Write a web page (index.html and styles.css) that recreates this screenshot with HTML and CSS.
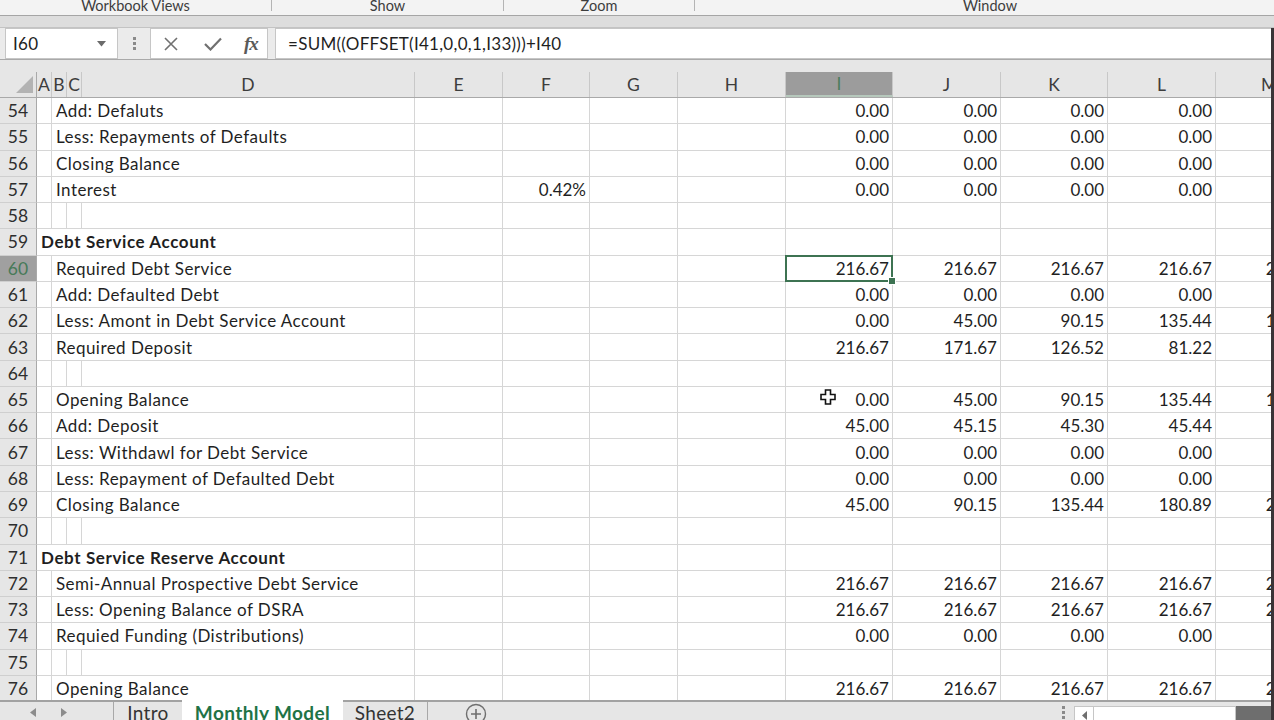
FILE: index.html
```html
<!DOCTYPE html>
<html lang="en">
<head>
<meta charset="utf-8">
<title>Monthly Model</title>
<link rel="stylesheet" href="styles.css">
</head>
<body>
<div class="ribbon">
  <div class="grp g1"><span>Workbook Views</span></div>
  <div class="grp g2"><span>Show</span></div>
  <div class="grp g3"><span>Zoom</span></div>
  <div class="grp g4"><span>Window</span></div>
</div>
<div class="band"></div>
<div class="fbar">
  <div class="namebox"><span>I60</span>
    <svg class="caret" width="9" height="6" viewBox="0 0 9 6"><polygon points="0,0 9,0 4.5,5.5" fill="#6b6b6b"/></svg>
  </div>
  <div class="fdots"><i></i><i></i><i></i></div>
  <div class="fbtns">
    <svg class="ic-x" width="14" height="14" viewBox="0 0 14 14"><path d="M1 1 L13 13 M13 1 L1 13" stroke="#707070" stroke-width="1.6" fill="none"/></svg>
    <svg class="ic-ok" width="18" height="14" viewBox="0 0 18 14"><path d="M1 7 L6.5 12.5 L17 1.5" stroke="#707070" stroke-width="2.2" fill="none"/></svg>
    <span class="fx">fx</span>
  </div>
  <div class="finput">=SUM((OFFSET(I41,0,0,1,I33)))+I40</div>
</div>
<div class="gap"></div>
<div class="sheet">
  <div class="row hdr">
    <div class="corner"><svg width="17" height="17" viewBox="0 0 17 17"><polygon points="17,0 17,17 0,17" fill="#b3b3b3"/></svg></div>
    <div class="hc">A</div><div class="hc">B</div><div class="hc">C</div><div class="hc">D</div>
    <div class="hc">E</div><div class="hc">F</div><div class="hc">G</div><div class="hc">H</div>
    <div class="hc hsel">I</div><div class="hc">J</div><div class="hc">K</div><div class="hc">L</div><div class="hc">M</div>
  </div>
  <div class="rows">
    <div class="row"><div class="rh">54</div><div class="c"></div><div class="c lab">Add: Defaluts</div><div class="c"></div><div class="c"></div><div class="c"></div><div class="c"></div><div class="c n">0.00</div><div class="c n">0.00</div><div class="c n">0.00</div><div class="c n">0.00</div><div class="c n">0.00</div></div>
    <div class="row"><div class="rh">55</div><div class="c"></div><div class="c lab">Less: Repayments of Defaults</div><div class="c"></div><div class="c"></div><div class="c"></div><div class="c"></div><div class="c n">0.00</div><div class="c n">0.00</div><div class="c n">0.00</div><div class="c n">0.00</div><div class="c n">0.00</div></div>
    <div class="row"><div class="rh">56</div><div class="c"></div><div class="c lab">Closing Balance</div><div class="c"></div><div class="c"></div><div class="c"></div><div class="c"></div><div class="c n">0.00</div><div class="c n">0.00</div><div class="c n">0.00</div><div class="c n">0.00</div><div class="c n">0.00</div></div>
    <div class="row"><div class="rh">57</div><div class="c"></div><div class="c lab">Interest</div><div class="c"></div><div class="c n">0.42%</div><div class="c"></div><div class="c"></div><div class="c n">0.00</div><div class="c n">0.00</div><div class="c n">0.00</div><div class="c n">0.00</div><div class="c n">0.00</div></div>
    <div class="row"><div class="rh">58</div><div class="c"></div><div class="c"></div><div class="c"></div><div class="c"></div><div class="c"></div><div class="c"></div><div class="c"></div><div class="c"></div><div class="c"></div><div class="c"></div><div class="c"></div><div class="c"></div><div class="c"></div></div>
    <div class="row"><div class="rh">59</div><div class="c sec">Debt Service Account</div><div class="c"></div><div class="c"></div><div class="c"></div><div class="c"></div><div class="c"></div><div class="c"></div><div class="c"></div><div class="c"></div><div class="c"></div></div>
    <div class="row"><div class="rh rsel">60</div><div class="c"></div><div class="c lab">Required Debt Service</div><div class="c"></div><div class="c"></div><div class="c"></div><div class="c"></div><div class="c n sel">216.67</div><div class="c n">216.67</div><div class="c n">216.67</div><div class="c n">216.67</div><div class="c n">216.67</div></div>
    <div class="row"><div class="rh">61</div><div class="c"></div><div class="c lab">Add: Defaulted Debt</div><div class="c"></div><div class="c"></div><div class="c"></div><div class="c"></div><div class="c n">0.00</div><div class="c n">0.00</div><div class="c n">0.00</div><div class="c n">0.00</div><div class="c n">0.00</div></div>
    <div class="row"><div class="rh">62</div><div class="c"></div><div class="c lab">Less: Amont in Debt Service Account</div><div class="c"></div><div class="c"></div><div class="c"></div><div class="c"></div><div class="c n">0.00</div><div class="c n">45.00</div><div class="c n">90.15</div><div class="c n">135.44</div><div class="c n">180.89</div></div>
    <div class="row"><div class="rh">63</div><div class="c"></div><div class="c lab">Required Deposit</div><div class="c"></div><div class="c"></div><div class="c"></div><div class="c"></div><div class="c n">216.67</div><div class="c n">171.67</div><div class="c n">126.52</div><div class="c n">81.22</div><div class="c n">35.78</div></div>
    <div class="row"><div class="rh">64</div><div class="c"></div><div class="c"></div><div class="c"></div><div class="c"></div><div class="c"></div><div class="c"></div><div class="c"></div><div class="c"></div><div class="c"></div><div class="c"></div><div class="c"></div><div class="c"></div><div class="c"></div></div>
    <div class="row"><div class="rh">65</div><div class="c"></div><div class="c lab">Opening Balance</div><div class="c"></div><div class="c"></div><div class="c"></div><div class="c"></div><div class="c n">0.00</div><div class="c n">45.00</div><div class="c n">90.15</div><div class="c n">135.44</div><div class="c n">180.89</div></div>
    <div class="row"><div class="rh">66</div><div class="c"></div><div class="c lab">Add: Deposit</div><div class="c"></div><div class="c"></div><div class="c"></div><div class="c"></div><div class="c n">45.00</div><div class="c n">45.15</div><div class="c n">45.30</div><div class="c n">45.44</div><div class="c n">45.59</div></div>
    <div class="row"><div class="rh">67</div><div class="c"></div><div class="c lab">Less: Withdawl for Debt Service</div><div class="c"></div><div class="c"></div><div class="c"></div><div class="c"></div><div class="c n">0.00</div><div class="c n">0.00</div><div class="c n">0.00</div><div class="c n">0.00</div><div class="c n">0.00</div></div>
    <div class="row"><div class="rh">68</div><div class="c"></div><div class="c lab">Less: Repayment of Defaulted Debt</div><div class="c"></div><div class="c"></div><div class="c"></div><div class="c"></div><div class="c n">0.00</div><div class="c n">0.00</div><div class="c n">0.00</div><div class="c n">0.00</div><div class="c n">0.00</div></div>
    <div class="row"><div class="rh">69</div><div class="c"></div><div class="c lab">Closing Balance</div><div class="c"></div><div class="c"></div><div class="c"></div><div class="c"></div><div class="c n">45.00</div><div class="c n">90.15</div><div class="c n">135.44</div><div class="c n">180.89</div><div class="c n">226.48</div></div>
    <div class="row"><div class="rh">70</div><div class="c"></div><div class="c"></div><div class="c"></div><div class="c"></div><div class="c"></div><div class="c"></div><div class="c"></div><div class="c"></div><div class="c"></div><div class="c"></div><div class="c"></div><div class="c"></div><div class="c"></div></div>
    <div class="row"><div class="rh">71</div><div class="c sec">Debt Service Reserve Account</div><div class="c"></div><div class="c"></div><div class="c"></div><div class="c"></div><div class="c"></div><div class="c"></div><div class="c"></div><div class="c"></div><div class="c"></div></div>
    <div class="row"><div class="rh">72</div><div class="c"></div><div class="c lab">Semi-Annual Prospective Debt Service</div><div class="c"></div><div class="c"></div><div class="c"></div><div class="c"></div><div class="c n">216.67</div><div class="c n">216.67</div><div class="c n">216.67</div><div class="c n">216.67</div><div class="c n">216.67</div></div>
    <div class="row"><div class="rh">73</div><div class="c"></div><div class="c lab">Less: Opening Balance of DSRA</div><div class="c"></div><div class="c"></div><div class="c"></div><div class="c"></div><div class="c n">216.67</div><div class="c n">216.67</div><div class="c n">216.67</div><div class="c n">216.67</div><div class="c n">216.67</div></div>
    <div class="row"><div class="rh">74</div><div class="c"></div><div class="c lab">Requied Funding (Distributions)</div><div class="c"></div><div class="c"></div><div class="c"></div><div class="c"></div><div class="c n">0.00</div><div class="c n">0.00</div><div class="c n">0.00</div><div class="c n">0.00</div><div class="c n">0.00</div></div>
    <div class="row"><div class="rh">75</div><div class="c"></div><div class="c"></div><div class="c"></div><div class="c"></div><div class="c"></div><div class="c"></div><div class="c"></div><div class="c"></div><div class="c"></div><div class="c"></div><div class="c"></div><div class="c"></div><div class="c"></div></div>
    <div class="row"><div class="rh">76</div><div class="c"></div><div class="c lab">Opening Balance</div><div class="c"></div><div class="c"></div><div class="c"></div><div class="c"></div><div class="c n">216.67</div><div class="c n">216.67</div><div class="c n">216.67</div><div class="c n">216.67</div><div class="c n">216.67</div></div>
  </div>
</div>
<div class="tabbar">
  <div class="nav">
    <svg width="6" height="9" viewBox="0 0 6 9"><polygon points="6,0 6,9 0,4.5" fill="#8c8c8c"/></svg>
    <svg width="6" height="9" viewBox="0 0 6 9"><polygon points="0,0 0,9 6,4.5" fill="#8c8c8c"/></svg>
  </div>
  <div class="tab t-intro">Intro</div>
  <div class="tab active">Monthly Model</div>
  <div class="tab t-sheet2">Sheet2</div>
  <div class="addsheet"><svg width="22" height="22" viewBox="0 0 22 22"><circle cx="11" cy="11" r="9.5" fill="none" stroke="#6f6f6f" stroke-width="1.4"/><path d="M11 6 V16 M6 11 H16" stroke="#6f6f6f" stroke-width="1.6"/></svg></div>
  <div class="spacer"></div>
  <div class="tdots"><i></i><i></i><i></i></div>
  <div class="hscroll">
    <div class="harrow"><svg width="5" height="9" viewBox="0 0 5 9"><polygon points="5,0 5,9 0,4.5" fill="#6f6f6f"/></svg></div>
    <div class="htrack"></div>
  </div>
  <div class="hthumb"></div>
</div>
<svg class="cursor" width="16" height="16" viewBox="0 0 16 16"><polygon points="5.5,1 10.5,1 10.5,5.5 15,5.5 15,10.5 10.5,10.5 10.5,15 5.5,15 5.5,10.5 1,10.5 1,5.5 5.5,5.5" fill="#fff" stroke="#111" stroke-width="1.6"/></svg>
<div class="edge"></div>
</body>
</html>
```

FILE: styles.css
```css
* { box-sizing: border-box; }
html, body { margin: 0; padding: 0; }
body {
  width: 1274px;
  height: 720px;
  overflow: hidden;
  position: relative;
  background: #e6e6e6;
  font-family: Lato, "Open Sans", sans-serif;
  color: #1f1f1f;
}

/* ribbon group labels */
.ribbon {
  height: 16px;
  background: #f3f3f3;
  border-bottom: 1px solid #a5a5a5;
  display: flex;
  align-items: flex-start;
  font-size: 14.5px;
  color: #3d3d3d;
}
.grp {
  height: 11px;
  display: flex;
  justify-content: center;
  align-items: flex-end;
  line-height: 1;
  border-right: 1px solid #b4b4b4;
  white-space: nowrap;
}
.grp span { position: relative; top: 2px; }
.g1 { flex: 0 0 272px; }
.g2 { flex: 0 0 232px; }
.g3 { flex: 0 0 191px; }
.g4 { flex: 0 0 590px; border-right: none; }

.band {
  height: 12px;
  background: #dddddd;
  border-bottom: 1px solid #c3c3c3;
}

/* formula bar */
.fbar {
  height: 32px;
  display: flex;
  background: #ebebeb;
  border-bottom: 1px solid #a9a9a9;
  font-size: 17px;
}
.namebox {
  margin-left: 5px;
  width: 113px;
  background: #fff;
  border: 1px solid #c6c6c6;
  display: flex;
  align-items: center;
  justify-content: space-between;
  padding: 0 11px 0 7px;
  color: #222;
  letter-spacing: 0.3px;
}
.caret { margin-top: 1px; }
.fdots {
  width: 32px;
  display: flex;
  flex-direction: column;
  align-items: center;
  justify-content: center;
  gap: 2px;
}
.fdots i, .tdots i {
  display: block;
  width: 3px;
  height: 3px;
  background: #8a8a8a;
}
.fbtns {
  width: 118px;
  background: #fff;
  border: 1px solid #c6c6c6;
  display: flex;
  align-items: center;
  padding-left: 13px;
}
.ic-x { margin-right: 26px; }
.ic-ok { margin-right: 22px; }
.fx {
  font-family: "Liberation Serif", serif;
  font-style: italic;
  font-weight: 700;
  font-size: 19px;
  color: #5a5a5a;
  letter-spacing: -1px;
}
.finput {
  margin-left: 7px;
  flex: 1;
  background: #fff;
  border: 1px solid #c6c6c6;
  border-right: none;
  display: flex;
  align-items: center;
  padding-left: 12px;
  color: #1f1f1f;
  white-space: nowrap;
  letter-spacing: 0.28px;
}
.gap { height: 12px; background: #e6e6e6; }

/* sheet */
.sheet {
  width: 1323px;
  font-size: 17px;
}
.row {
  display: grid;
  grid-template-columns: 37px 15px 15px 15px 333px 88px 87px 88px 108px 107px 108px 107px 108px 107px;
  height: 26.27px;
  background: #fff;
}
.row.hdr {
  height: 26px;
  background: #e6e6e6;
  border-bottom: 1px solid #a9a9a9;
}
.corner {
  border-right: 1px solid #a9a9a9;
  display: flex;
  align-items: flex-end;
  justify-content: flex-end;
  padding: 0 3px 4px 0;
}
.hc {
  border-right: 1px solid #c8c8c8;
  display: flex;
  align-items: center;
  justify-content: center;
  color: #3d3d3d;
  line-height: 1;
  font-size: 17.5px;
}
.hsel {
  background: #9c9c9c;
  color: #4c7c5e;
  border-bottom: 2px solid #b6c8bc;
}
.rows {
  height: 602px;
  overflow: hidden;
}
.rh {
  background: #e6e6e6;
  border-right: 1px solid #a9a9a9;
  border-bottom: 1px solid #cfcfcf;
  display: flex;
  align-items: center;
  justify-content: center;
  color: #2e2e2e;
  font-size: 17.5px;
}
.rsel {
  background: #a0a0a0;
  color: #477a59;
}
.c {
  border-right: 1px solid #d6d6d6;
  border-bottom: 1px solid #d6d6d6;
  display: flex;
  align-items: center;
  white-space: nowrap;
  overflow: visible;
  min-width: 0;
}
.lab {
  grid-column: span 3;
  padding-left: 4px;
  letter-spacing: 0.45px;
}
.sec {
  grid-column: span 4;
  padding-left: 4px;
  font-weight: 700;
  letter-spacing: 0.6px;
}
.n {
  justify-content: flex-end;
  padding-right: 3px;
}
.sel { position: relative; }
.sel::after {
  content: "";
  position: absolute;
  left: -1px;
  top: -1px;
  right: -1px;
  bottom: -1px;
  border: 2px solid #3d7352;
}
.sel::before {
  content: "";
  position: absolute;
  right: -4px;
  bottom: -4px;
  width: 6px;
  height: 6px;
  background: #3d7352;
  border: 1px solid #fff;
  z-index: 2;
}

/* sheet tabs */
.tabbar {
  height: 20px;
  background: #e6e6e6;
  border-top: 2px solid #a2a2a2;
  display: flex;
  font-size: 19px;
  line-height: 19px;
}
.nav {
  width: 113px;
  display: flex;
  align-items: center;
  padding: 2px 0 0 30px;
  gap: 25px;
}
.tab {
  padding-top: 1px;
  text-align: center;
  color: #333;
  white-space: nowrap;
  letter-spacing: 0.3px;
}
.t-intro {
  width: 69px;
  border-left: 1px solid #a8a8a8;
}
.active {
  width: 161px;
  margin-top: -2px;
  padding-top: 3px;
  background: #fff;
  color: #217346;
  font-weight: 700;
  letter-spacing: 0.4px;
}
.t-sheet2 {
  width: 85px;
  border-right: 1px solid #a8a8a8;
}
.addsheet {
  width: 96px;
  display: flex;
  justify-content: center;
  padding-top: 1px;
}
.spacer { flex: 1; }
.tdots {
  width: 22px;
  display: flex;
  flex-direction: column;
  align-items: center;
  padding-top: 4px;
  gap: 2px;
}
.hscroll {
  width: 162px;
  margin-top: 4px;
  background: #fff;
  border: 1px solid #c6c6c6;
  border-bottom: none;
  display: flex;
}
.harrow {
  width: 19px;
  border-right: 1px solid #c6c6c6;
  display: flex;
  justify-content: center;
  padding-top: 4px;
}
.htrack { flex: 1; }
.hthumb {
  width: 38px;
  margin-top: 4px;
  background: #6e6e6e;
}

/* overlays */
.cursor {
  position: absolute;
  left: 820px;
  top: 389px;
}
.edge {
  position: absolute;
  right: 0;
  top: 28px;
  width: 3px;
  height: 692px;
  background: #3a3437;
}
```
